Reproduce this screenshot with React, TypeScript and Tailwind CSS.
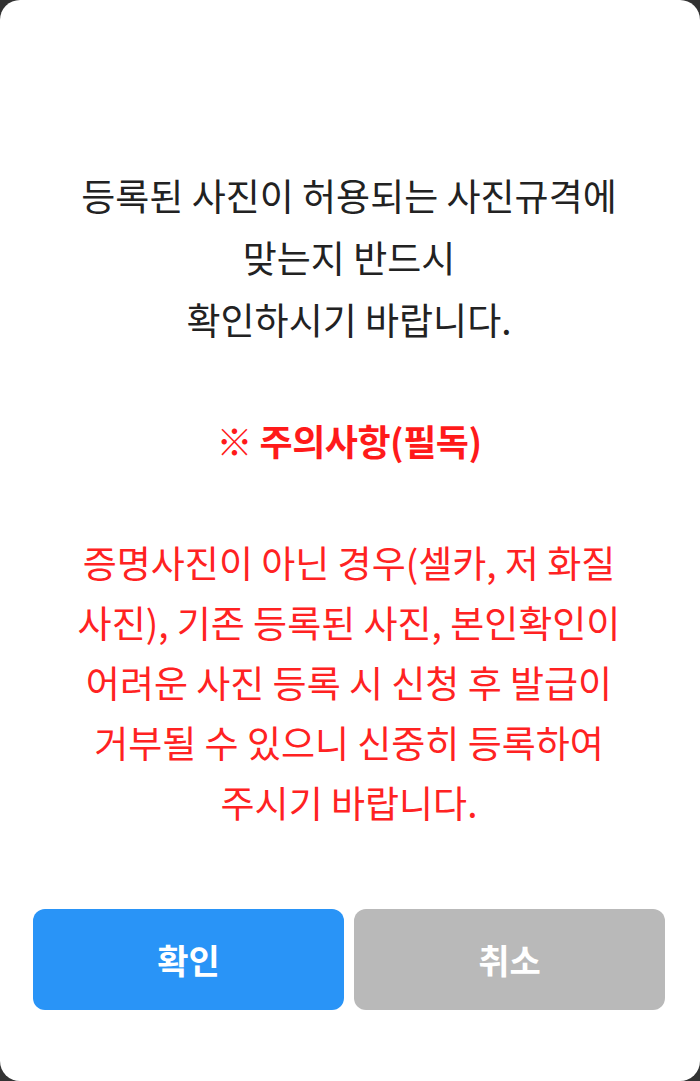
export default function App() {
  return (
    <div className="min-h-[1081px] w-[700px] bg-[#333333]" style={{ fontFamily: '"Noto Sans CJK KR", "Noto Sans", sans-serif' }}>
      <div className="flex h-[1081px] flex-col rounded-[20px] bg-white pl-[33px] pr-[35px] pt-[164px]">
        <div className="text-center text-[37px] leading-[62px] text-[#222222]">
          <p className="whitespace-nowrap">등록된 사진이 허용되는 사진규격에</p>
          <p className="whitespace-nowrap">맞는지 반드시</p>
          <p className="whitespace-nowrap">확인하시기 바랍니다.</p>
        </div>

        <p className="mt-[59px] text-center text-[36px] font-bold leading-[62px] tracking-[-0.5px] text-[#ff1a1a]">
          ※ 주의사항(필독)
        </p>

        <div className="mt-[61px] text-center text-[37px] leading-[60px] text-[#ff2222]">
          <p className="whitespace-nowrap">증명사진이 아닌 경우(셀카, 저 화질</p>
          <p className="whitespace-nowrap">사진), 기존 등록된 사진, 본인확인이</p>
          <p className="whitespace-nowrap">어려운 사진 등록 시 신청 후 발급이</p>
          <p className="whitespace-nowrap">거부될 수 있으니 신중히 등록하여</p>
          <p className="whitespace-nowrap">주시기 바랍니다.</p>
        </div>

        <div className="mt-[77px] flex gap-[10px]">
          <button className="h-[101px] flex-1 rounded-[12px] bg-[#2994f7] text-[34px] font-bold text-white">
            확인
          </button>
          <button className="h-[101px] flex-1 rounded-[12px] bg-[#b9b9b9] text-[34px] font-bold text-white">
            취소
          </button>
        </div>
      </div>
    </div>
  );
}
